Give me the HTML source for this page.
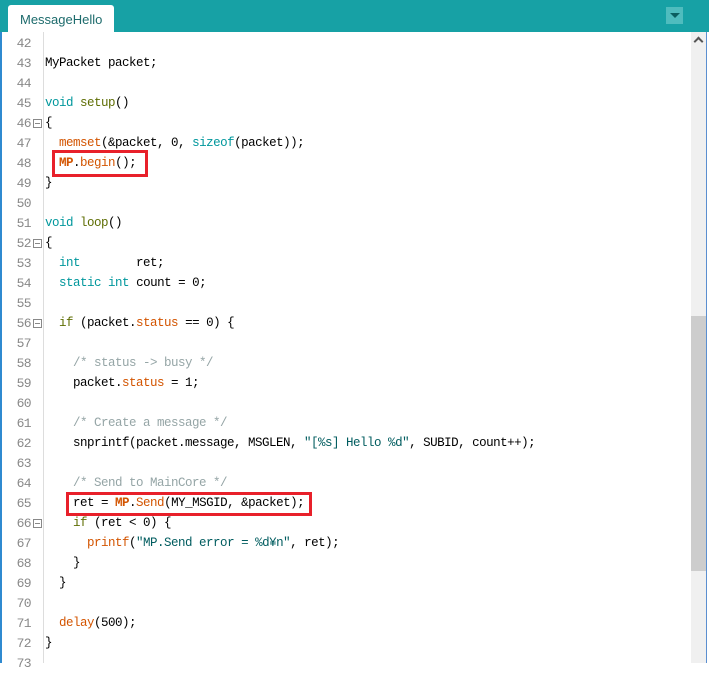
<!DOCTYPE html>
<html><head><meta charset="utf-8"><style>
*{margin:0;padding:0;box-sizing:border-box}
body{width:709px;height:663px;overflow:hidden;background:#fff;position:relative;font-family:"Liberation Mono","Noto Sans CJK JP",monospace;}
#hdr{position:absolute;left:0;top:0;width:709px;height:32px;background:#17a1a5}
#tab{position:absolute;left:8px;top:5px;width:106px;height:27px;background:#fff;border-radius:3px 3px 0 0;font:13px "Liberation Sans",sans-serif;color:#1d6b6c;padding:7px 0 0 12px}
#dd{position:absolute;left:666px;top:7px;width:17px;height:17px;background:#4fbcbe}
#dd:after{content:"";position:absolute;left:4px;top:6px;border-left:5px solid transparent;border-right:5px solid transparent;border-top:5px solid #0b5e60}
#lb{position:absolute;left:0;top:32px;width:2px;height:631px;background:#2f8ad0}
#gl{position:absolute;left:43px;top:32px;width:1px;height:631px;background:#ddd}
#sb{position:absolute;left:691px;top:32px;width:15px;height:631px;background:#f0f0f0}
#th{position:absolute;left:691px;top:316px;width:15px;height:255px;background:#cdcdcd}
#rb{position:absolute;left:706px;top:32px;width:3px;height:631px;background:#fff;border-left:1px solid #5b8fd0}
#up{position:absolute;left:695px;top:38px;width:7px;height:7px;border-left:2px solid #555;border-top:2px solid #555;transform:rotate(45deg)}
.ln{position:absolute;left:0;width:31px;text-align:right;font-size:13px;letter-spacing:-0.6px;color:#888;height:20px;line-height:21px}
.c{position:absolute;left:45px;font-size:12.5px;letter-spacing:-0.5px;line-height:21px;height:20px;white-space:pre;color:#000}
.f{position:absolute;left:33px;width:9px;height:9px;border:1px solid #888}
.f:after{content:"";position:absolute;left:1px;top:3px;width:5px;height:1px;background:#888}
.k{color:#00979c}.o{color:#d35400}.g{color:#95a5a6}.s{color:#005c5f}.v{color:#5e6d03}.b{color:#d35400;font-weight:bold}
.r{position:absolute;border:3px solid #e8202a}
</style></head><body>
<div id="hdr"></div><div id="tab">MessageHello</div><div id="dd"></div>
<div id="lb"></div><div id="gl"></div><div id="sb"></div><div id="th"></div><div id="rb"></div><div id="up"></div>

<div class="ln" style="top:33px">42</div>
<div class="ln" style="top:53px">43</div><div class="c" style="top:53px">MyPacket packet;</div>
<div class="ln" style="top:73px">44</div>
<div class="ln" style="top:93px">45</div><div class="c" style="top:93px"><span class="k">void</span> <span class="v">setup</span>()</div>
<div class="ln" style="top:113px">46</div><div class="f" style="top:119px"></div><div class="c" style="top:113px">{</div>
<div class="ln" style="top:133px">47</div><div class="c" style="top:133px">  <span class="o">memset</span>(&amp;packet, 0, <span class="k">sizeof</span>(packet));</div>
<div class="ln" style="top:153px">48</div><div class="c" style="top:153px">  <span class="b">MP</span>.<span class="o">begin</span>();</div>
<div class="ln" style="top:173px">49</div><div class="c" style="top:173px">}</div>
<div class="ln" style="top:193px">50</div>
<div class="ln" style="top:213px">51</div><div class="c" style="top:213px"><span class="k">void</span> <span class="v">loop</span>()</div>
<div class="ln" style="top:233px">52</div><div class="f" style="top:239px"></div><div class="c" style="top:233px">{</div>
<div class="ln" style="top:253px">53</div><div class="c" style="top:253px">  <span class="k">int</span>        ret;</div>
<div class="ln" style="top:273px">54</div><div class="c" style="top:273px">  <span class="k">static</span> <span class="k">int</span> count = 0;</div>
<div class="ln" style="top:293px">55</div>
<div class="ln" style="top:313px">56</div><div class="f" style="top:319px"></div><div class="c" style="top:313px">  <span class="v">if</span> (packet.<span class="o">status</span> == 0) {</div>
<div class="ln" style="top:333px">57</div>
<div class="ln" style="top:353px">58</div><div class="c" style="top:353px">    <span class="g">/* status -&gt; busy */</span></div>
<div class="ln" style="top:373px">59</div><div class="c" style="top:373px">    packet.<span class="o">status</span> = 1;</div>
<div class="ln" style="top:393px">60</div>
<div class="ln" style="top:413px">61</div><div class="c" style="top:413px">    <span class="g">/* Create a message */</span></div>
<div class="ln" style="top:433px">62</div><div class="c" style="top:433px">    snprintf(packet.message, MSGLEN, <span class="s">"[%s] Hello %d"</span>, SUBID, count++);</div>
<div class="ln" style="top:453px">63</div>
<div class="ln" style="top:473px">64</div><div class="c" style="top:473px">    <span class="g">/* Send to MainCore */</span></div>
<div class="ln" style="top:493px">65</div><div class="c" style="top:493px">    ret = <span class="b">MP</span>.<span class="o">Send</span>(MY_MSGID, &amp;packet);</div>
<div class="ln" style="top:513px">66</div><div class="f" style="top:519px"></div><div class="c" style="top:513px">    <span class="v">if</span> (ret &lt; 0) {</div>
<div class="ln" style="top:533px">67</div><div class="c" style="top:533px">      <span class="o">printf</span>(<span class="s">"MP.Send error = %d¥n"</span>, ret);</div>
<div class="ln" style="top:553px">68</div><div class="c" style="top:553px">    }</div>
<div class="ln" style="top:573px">69</div><div class="c" style="top:573px">  }</div>
<div class="ln" style="top:593px">70</div>
<div class="ln" style="top:613px">71</div><div class="c" style="top:613px">  <span class="o">delay</span>(500);</div>
<div class="ln" style="top:633px">72</div><div class="c" style="top:633px">}</div>
<div class="ln" style="top:653px">73</div>

<div class="r" style="left:52px;top:150px;width:96px;height:27px"></div>
<div class="r" style="left:66px;top:492px;width:246px;height:24px"></div>
</body></html>
